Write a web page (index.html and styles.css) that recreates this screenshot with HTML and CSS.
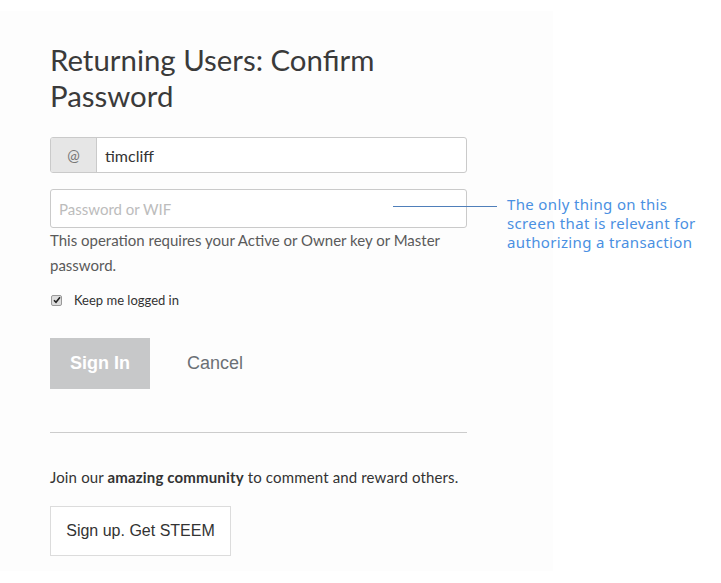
FILE: index.html
```html
<!DOCTYPE html>
<html>
<head>
<meta charset="utf-8">
<link rel="stylesheet" href="styles.css">
</head>
<body>
<div class="panel">
  <h1 class="title">Returning Users: Confirm Password</h1>
  <div class="input-group">
    <span class="addon">@</span>
    <span class="field-value">timcliff</span>
  </div>
  <div class="pw-input">Password or WIF</div>
  <p class="help">This operation requires your Active or Owner key or Master password.</p>
  <label class="keep">
    <span class="check"><svg width="8" height="8" viewBox="0 0 8 8"><path d="M1 4.2 L3 6.3 L7 1.3" fill="none" stroke="#222" stroke-width="1.6"/></svg></span>
    Keep me logged in
  </label>
  <div class="actions">
    <span class="btn-signin">Sign In</span>
    <span class="btn-cancel">Cancel</span>
  </div>
  <hr class="divider">
  <p class="join">Join our <b>amazing community</b> to comment and reward others.</p>
  <span class="btn-signup">Sign up. Get STEEM</span>
</div>
<div class="note">
  <span class="note-line"></span>
  <span class="note-text">The only thing on this<br>screen that is relevant for<br>authorizing a transaction</span>
</div>
</body>
</html>
```
FILE: styles.css
```css
html, body {
  margin: 0;
  padding: 0;
  background: #ffffff;
}
body {
  font-family: "Lato", "Open Sans", sans-serif;
  color: #333;
  position: relative;
  width: 721px;
  height: 583px;
  overflow: hidden;
}
.panel {
  margin-top: 11px;
  width: 503px;
  height: 560px;
  padding-left: 50px;
  background: #fdfdfd;
  box-sizing: content-box;
  overflow: hidden;
}
.title {
  width: 417px;
  margin: 31px 0 0 0;
  font-weight: 400;
  font-size: 29.4px;
  line-height: 36px;
  color: #3a3a3a;
}
.input-group {
  margin-top: 23px;
  width: 417px;
  height: 36px;
  box-sizing: border-box;
  border: 1px solid #cacaca;
  border-radius: 3px;
  display: flex;
  align-items: stretch;
  background: #fff;
}
.addon {
  width: 45px;
  background: #e6e6e6;
  border-right: 1px solid #cacaca;
  display: flex;
  align-items: center;
  justify-content: center;
  font-size: 15px;
  color: #777;
  border-radius: 2px 0 0 2px;
}
.field-value {
  display: flex;
  align-items: center;
  padding-left: 8px;
  font-size: 16px;
  color: #333;
}
.pw-input {
  margin-top: 16px;
  width: 417px;
  height: 39px;
  box-sizing: border-box;
  border: 1px solid #cacaca;
  border-radius: 3px;
  background: #fff;
  padding-left: 8px;
  display: flex;
  align-items: center;
  font-size: 15px;
  color: #bcbcbc;
}
.help {
  margin: 0;
  width: 417px;
  font-size: 15px;
  line-height: 25px;
  color: #5a5a5a;
}
.keep {
  display: flex;
  align-items: center;
  margin-top: 14px;
  height: 16px;
  font-size: 13px;
  color: #333;
}
.check {
  width: 11px;
  height: 11px;
  box-sizing: border-box;
  border: 1px solid #999;
  border-radius: 2px;
  background: #ddd;
  margin-left: 1px;
  margin-right: 12px;
  display: flex;
  align-items: center;
  justify-content: center;
}
.actions {
  margin-top: 30px;
  display: flex;
  align-items: center;
}
.btn-signin {
  width: 100px;
  height: 51px;
  background: #c7c8c9;
  color: #fff;
  font-family: "Liberation Sans", Arial, sans-serif;
  font-weight: 700;
  font-size: 18px;
  display: flex;
  align-items: center;
  justify-content: center;
}
.btn-cancel {
  margin-left: 37px;
  font-family: "Liberation Sans", Arial, sans-serif;
  font-size: 18px;
  color: #6b7075;
}
.divider {
  margin: 43px 0 0 0;
  width: 417px;
  border: 0;
  border-top: 1px solid #cccccc;
  height: 0;
}
.join {
  margin: 34px 0 0 0;
  font-size: 15px;
  line-height: 20px;
  letter-spacing: 0.15px;
  color: #333;
}
.btn-signup {
  margin-top: 19px;
  width: 181px;
  height: 50px;
  box-sizing: border-box;
  border: 1px solid #dcdcdc;
  background: #fff;
  display: flex;
  align-items: center;
  justify-content: center;
  font-family: "Liberation Sans", Arial, sans-serif;
  font-size: 16px;
  color: #333;
}
.note {
  position: absolute;
  left: 393px;
  top: 195px;
  display: flex;
  align-items: flex-start;
}
.note-line {
  width: 104px;
  height: 1px;
  background: #4f7fba;
  margin-top: 11px;
}
.note-text {
  margin-left: 10px;
  font-family: "Noto Sans", sans-serif;
  font-size: 15px;
  line-height: 19px;
  letter-spacing: 0.35px;
  color: #4a90e2;
}
```
